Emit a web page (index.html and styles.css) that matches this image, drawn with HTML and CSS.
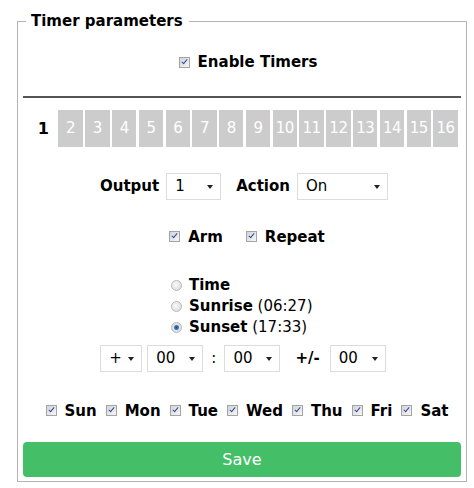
FILE: index.html
```html
<!DOCTYPE html>
<html>
<head>
<meta charset="utf-8">
<link rel="stylesheet" href="styles.css">
</head>
<body>
<fieldset class="timer">
  <legend class="title">Timer parameters</legend>
  <div class="enable"><label class="chk"><input type="checkbox" checked><b>Enable Timers</b></label></div>
  <hr class="sep">
  <div class="tabs">
    <span class="tab current">1</span>
    <span class="tab">2</span><span class="tab">3</span><span class="tab">4</span><span class="tab">5</span>
    <span class="tab">6</span><span class="tab">7</span><span class="tab">8</span><span class="tab">9</span>
    <span class="tab">10</span><span class="tab">11</span><span class="tab">12</span><span class="tab">13</span>
    <span class="tab">14</span><span class="tab">15</span><span class="tab">16</span>
  </div>
  <div class="row outrow">
    <b class="lbl">Output</b>
    <span class="sel w-out"><select><option>1</option></select></span>
    <b class="lbl action">Action</b>
    <span class="sel w-act"><select><option>On</option></select></span>
  </div>
  <div class="row armrow">
    <label class="chk"><input type="checkbox" checked><b>Arm</b></label>
    <label class="chk repeat"><input type="checkbox" checked><b>Repeat</b></label>
  </div>
  <div class="radios">
    <label class="rad"><input type="radio" name="mode"><b>Time</b></label>
    <label class="rad"><input type="radio" name="mode"><b>Sunrise</b>&nbsp;(06:27)</label>
    <label class="rad"><input type="radio" name="mode" checked><b>Sunset</b>&nbsp;(17:33)</label>
  </div>
  <div class="row offrow">
    <span class="sel w-sign"><select><option>+</option></select></span>
    <span class="sel w-00"><select><option>00</option></select></span>
    <span class="colon">:</span>
    <span class="sel w-00"><select><option>00</option></select></span>
    <b class="pm">+/-</b>
    <span class="sel w-00"><select><option>00</option></select></span>
  </div>
  <div class="row days">
    <label class="chk"><input type="checkbox" checked><b>Sun</b></label>
    <label class="chk"><input type="checkbox" checked><b>Mon</b></label>
    <label class="chk"><input type="checkbox" checked><b>Tue</b></label>
    <label class="chk"><input type="checkbox" checked><b>Wed</b></label>
    <label class="chk"><input type="checkbox" checked><b>Thu</b></label>
    <label class="chk"><input type="checkbox" checked><b>Fri</b></label>
    <label class="chk"><input type="checkbox" checked><b>Sat</b></label>
  </div>
  <button class="save" type="button">Save</button>
</fieldset>
</body>
</html>
```
FILE: styles.css
```css
body {
  margin: 0;
  background: #fff;
  color: #000;
  font-family: "DejaVu Sans", Verdana, sans-serif;
  font-size: 15px;
}
.timer {
  box-sizing: border-box;
  width: 450px;
  margin: 12px 0 0 17px;
  padding: 0 5px 4px;
  border: 1px solid #b4b4b4;
}
.title {
  margin-left: 3px;
  padding: 0 6px 0 5px;
  font-weight: bold;
  font-size: 15px;
  line-height: 18px;
}
.enable {
  margin-top: 23px;
  text-align: center;
  line-height: 18px;
  padding-left: 12px;
}
.chk, .rad {
  display: inline-flex;
  align-items: center;
}
.chk input {
  appearance: none;
  -webkit-appearance: none;
  position: relative;
  box-sizing: border-box;
  width: 11px;
  height: 11px;
  margin: 0 8px 0 0;
  border: 1px solid #a4a4a4;
  background: linear-gradient(135deg, #d4d4d8, #f6f6f8);
}
.chk input:checked::after {
  content: "";
  position: absolute;
  left: 3px;
  top: 0px;
  width: 2px;
  height: 5px;
  border: solid #2d4a9e;
  border-width: 0 1.5px 1.5px 0;
  transform: rotate(40deg);
}
.sep {
  margin: 24px 0 0;
  border: 0;
  height: 2px;
  background: #555;
}
.tabs {
  margin-top: 12px;
  display: flex;
  gap: 2.4px;
  height: 37px;
  padding-left: 11px;
}
.tab {
  box-sizing: border-box;
  width: 24.4px;
  display: flex;
  align-items: center;
  justify-content: center;
  background: #cccccc;
  color: #fff;
  font-size: 15px;
  letter-spacing: -0.5px;
}
.tab.current {
  background: none;
  color: #000;
  font-weight: bold;
  font-size: 16px;
  width: 18px;
  margin-right: 4px;
}
.row {
  display: flex;
  justify-content: center;
  align-items: center;
}
.outrow {
  margin-top: 26px;
  height: 27px;
  padding-left: 4px;
}
.lbl { margin-right: 7px; }
.lbl.action { margin-left: 15px; }
.sel {
  position: relative;
  display: inline-block;
  height: 27px;
}
.sel select {
  appearance: none;
  -webkit-appearance: none;
  box-sizing: border-box;
  width: 100%;
  height: 27px;
  margin: 0;
  padding: 0 0 0 8px;
  border: 1px solid #dcdcdc;
  border-radius: 0;
  background: #fff;
  color: #000;
  font-family: "DejaVu Sans", Verdana, sans-serif;
  font-size: 15px;
}
.sel::after {
  content: "";
  position: absolute;
  right: 8px;
  top: 12px;
  border-left: 3px solid transparent;
  border-right: 3px solid transparent;
  border-top: 4px solid #222;
  pointer-events: none;
}
.w-out { width: 55px; }
.w-act { width: 91px; }
.w-sign { width: 42px; margin-right: 5px; }
.w-00 { width: 56px; }
.colon { margin: 0 8px; }
.pm { margin: 0 10px 0 15px; }
.armrow {
  margin-top: 28px;
  line-height: 18px;
  padding-left: 10px;
}
.armrow .repeat { margin-left: 23px; }
.radios {
  margin-top: 29px;
  display: flex;
  flex-direction: column;
  padding-left: 148px;
}
.rad {
  height: 21px;
  line-height: 21px;
}
.rad input {
  appearance: none;
  -webkit-appearance: none;
  box-sizing: border-box;
  width: 11px;
  height: 11px;
  margin: 0 7px 0 0;
  border: 1px solid #b8b8b8;
  border-radius: 50%;
  background: radial-gradient(circle at 40% 40%, #fafafa, #d6d6d6);
}
.rad input:checked {
  background: radial-gradient(circle, #1f4f86 0, #3a78b0 2px, #dfe8ef 3px, #cfcfcf 100%);
}
.offrow {
  margin-top: 7px;
  height: 27px;
  padding-left: 2px;
}
.days {
  margin-top: 30px;
  line-height: 18px;
  gap: 9px;
  padding-left: 10px;
}
.days .chk input { margin-right: 8px; }
.save {
  display: block;
  box-sizing: border-box;
  width: 100%;
  height: 35px;
  margin-top: 22px;
  border: 0;
  border-radius: 4px;
  background: #45bf67;
  color: #fff;
  font-family: "DejaVu Sans", Verdana, sans-serif;
  font-size: 16px;
}
```
